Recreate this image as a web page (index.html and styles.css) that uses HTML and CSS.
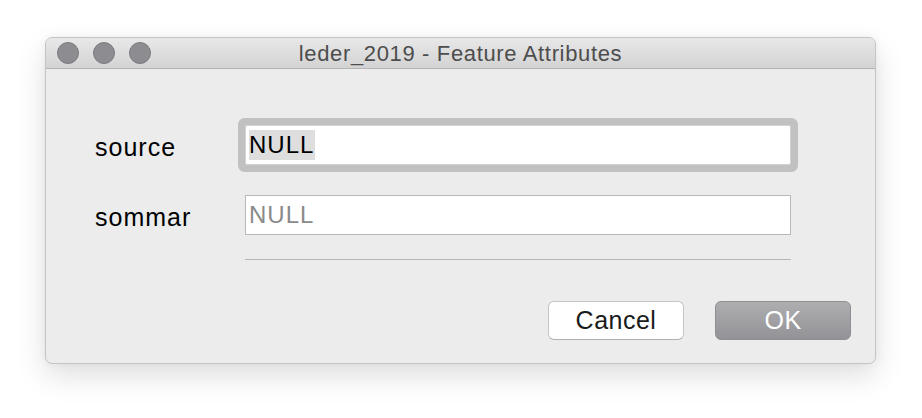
FILE: index.html
```html
<!DOCTYPE html>
<html lang="en">
<head>
<meta charset="utf-8">
<title>leder_2019 - Feature Attributes</title>
<link rel="stylesheet" href="styles.css">
</head>
<body>
<div class="desk">
  <div class="window">
    <div class="titlebar">
      <div class="lights">
        <span class="light"></span>
        <span class="light"></span>
        <span class="light"></span>
      </div>
      <div class="title">leder_2019 - Feature Attributes</div>
      <div class="spacer"></div>
    </div>
    <div class="content">
      <div class="row">
        <span class="label">source</span>
        <div class="field focused"><span class="selected">NULL</span></div>
      </div>
      <div class="row">
        <span class="label">sommar</span>
        <div class="field muted">NULL</div>
      </div>
      <div class="separator"></div>
      <div class="buttons">
        <button class="btn cancel">Cancel</button>
        <button class="btn ok">OK</button>
      </div>
    </div>
  </div>
</div>
</body>
</html>
```

FILE: styles.css
```css
html, body {
  margin: 0;
  padding: 0;
  background: #ffffff;
}

body {
  font-family: "Liberation Sans", Arial, sans-serif;
  color: #000;
}

.desk {
  padding: 37px 0 0 45px;
  width: 922px;
  height: 418px;
  box-sizing: border-box;
}

.window {
  width: 831px;
  box-sizing: border-box;
  background: #ececec;
  border: 1px solid #c4c4c4;
  border-radius: 7px;
  box-shadow: 0 12px 30px rgba(0, 0, 0, 0.13), 0 0 8px rgba(0, 0, 0, 0.05);
  overflow: hidden;
}

.titlebar {
  display: grid;
  grid-template-columns: 1fr auto 1fr;
  align-items: center;
  height: 30px;
  background: linear-gradient(#e8e8e8, #d3d3d3);
  border-bottom: 1px solid #b4b4b4;
}

.lights {
  display: flex;
  gap: 14px;
  padding-left: 11px;
}

.light {
  width: 22px;
  height: 22px;
  box-sizing: border-box;
  border-radius: 50%;
  background: #8d8c91;
  border: 1px solid #7a797e;
}

.title {
  font-size: 22px;
  letter-spacing: 0.65px;
  color: #4d4d4d;
  white-space: nowrap;
  position: relative;
  top: 1px;
}

.content {
  display: flex;
  flex-direction: column;
  padding: 56px 24px 23px 49px;
}

.row {
  display: flex;
  align-items: center;
  height: 40px;
}

.row + .row {
  margin-top: 30px;
}

.label {
  width: 150px;
  font-size: 25px;
  letter-spacing: 1px;
  color: #000;
  position: relative;
  top: 2px;
}

.field {
  width: 546px;
  height: 40px;
  box-sizing: border-box;
  background: #ffffff;
  border: 1px solid #b9b9b9;
  padding: 4px 0 0 3px;
  font-size: 24px;
  letter-spacing: 1px;
  line-height: 30px;
  color: #000;
}

.field.focused {
  border-color: #d4d4d4;
  box-shadow: 0 0 0 7px #c1c1c1;
  border-radius: 2px;
}

.field.muted {
  color: #8a8a8a;
}

.selected {
  display: inline-block;
  background: #dedede;
  padding-right: 1px;
}

.separator {
  margin: 24px 0 0 150px;
  width: 546px;
  height: 1px;
  background: #b5b5b5;
}

.buttons {
  display: flex;
  justify-content: flex-end;
  gap: 31px;
  margin-top: 41px;
}

.btn {
  width: 136px;
  height: 39px;
  box-sizing: border-box;
  border-radius: 6px;
  font-family: "Liberation Sans", Arial, sans-serif;
  font-size: 25px;
  letter-spacing: 0.5px;
  padding: 0;
}

.cancel {
  background: #ffffff;
  color: #1a1a1a;
  border: 1px solid #c6c6c6;
  border-bottom-color: #b0b0b0;
}

.ok {
  background: linear-gradient(#aeaeb1, #939397);
  color: #ffffff;
  border: 1px solid #8f8f93;
}
```
